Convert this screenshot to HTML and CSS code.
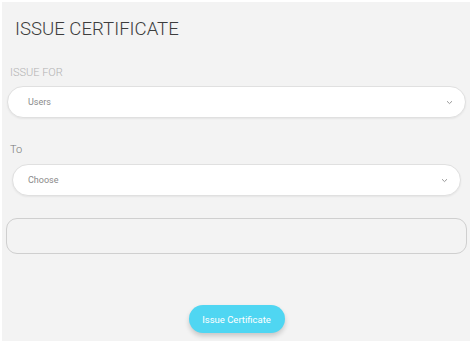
FILE: index.html
```html
<!DOCTYPE html>
<html>
<head>
<meta charset="utf-8">
<link rel="stylesheet" href="styles.css">
</head>
<body>
<div class="panel">
  <h1 class="title">ISSUE CERTIFICATE</h1>
  <div class="label upper">ISSUE FOR</div>
  <div class="select wide">
    <span>Users</span>
    <svg class="chev" width="7" height="5" viewBox="0 0 7 5"><path d="M1 1.2 L3.5 3.6 L6 1.2" fill="none" stroke="#999" stroke-width="1"/></svg>
  </div>
  <div class="label to">To</div>
  <div class="select narrow">
    <span>Choose</span>
    <svg class="chev" width="7" height="5" viewBox="0 0 7 5"><path d="M1 1.2 L3.5 3.6 L6 1.2" fill="none" stroke="#999" stroke-width="1"/></svg>
  </div>
  <div class="textbox"></div>
  <div class="actions">
    <button class="btn">Issue Certificate</button>
  </div>
</div>
</body>
</html>
```

FILE: styles.css
```css
html, body {
  margin: 0;
  padding: 0;
  background: #ffffff;
  width: 474px;
  height: 345px;
  overflow: hidden;
}
.panel {
  margin: 2px 4px 0 2px;
  height: 339px;
  background: #f3f3f3;
  font-family: Roboto, "Liberation Sans", sans-serif;
  box-sizing: border-box;
  padding-top: 15px;
  display: flex;
  flex-direction: column;
}
.title {
  margin: 0 0 0 13px;
  font-weight: 300;
  font-size: 18.6px;
  line-height: 24px;
  color: #3d3d3d;
}
.label {
  margin-left: 8px;
  font-size: 11px;
  line-height: 13px;
}
.upper {
  margin-top: 25px;
  color: #b2b2b2;
  font-weight: 300;
}
.to {
  margin-top: 25px;
  color: #777;
  font-weight: 300;
}
.select {
  height: 32px;
  box-sizing: border-box;
  background: #fff;
  border: 1px solid #e0e0e0;
  border-radius: 16px;
  box-shadow: 0 1px 2px rgba(0,0,0,0.06);
  display: flex;
  align-items: center;
  justify-content: space-between;
  padding: 0 12px 0 20px;
  font-size: 9px;
  color: #8a8a8a;
}
.wide {
  margin: 7px 4px 0 5px;
}
.narrow {
  margin: 8px 9px 0 10px;
  padding-left: 15px;
}
.chev {
  display: block;
}
.textbox {
  margin: 22px 3px 0 4px;
  height: 36px;
  box-sizing: border-box;
  border: 1px solid #cfcfcf;
  border-radius: 11px;
  background: #f3f3f3;
}
.actions {
  margin-top: 51px;
  display: flex;
  justify-content: center;
  padding-left: 1px;
}
.btn {
  width: 96px;
  height: 28px;
  border: none;
  border-radius: 14px;
  background: #4fd6f2;
  color: #fff;
  font-family: Roboto, "Liberation Sans", sans-serif;
  font-size: 9.5px;
  box-shadow: 0 3px 5px rgba(0,0,0,0.18);
  padding: 0;
}
```
